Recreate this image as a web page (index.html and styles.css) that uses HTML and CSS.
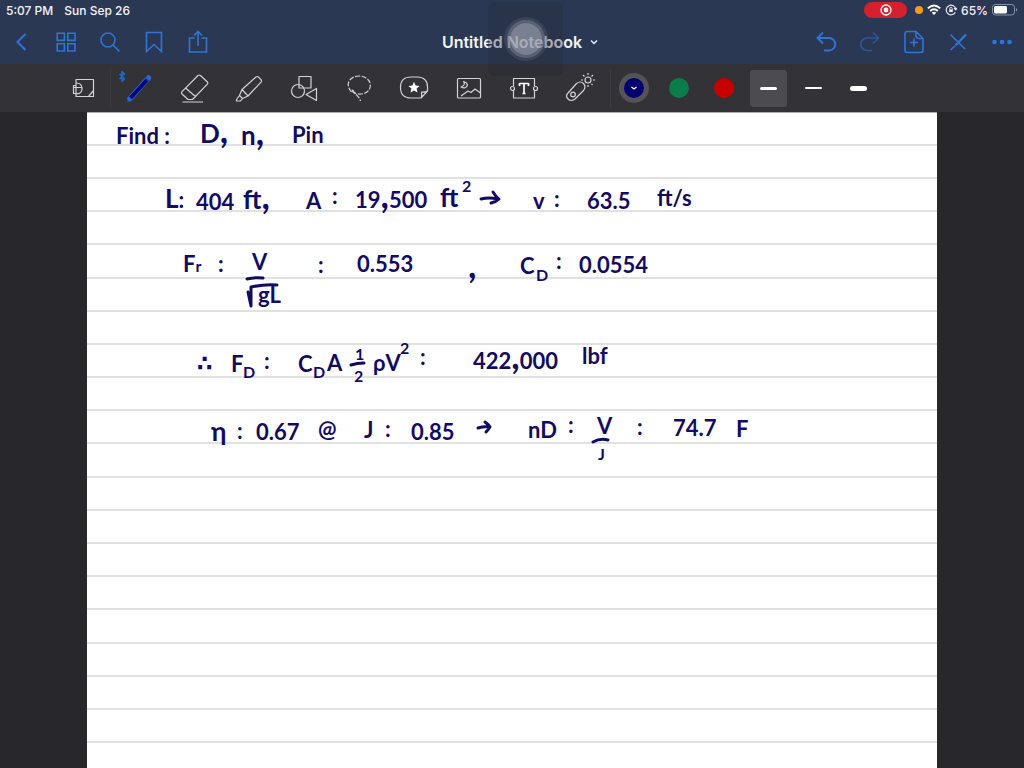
FILE: index.html
```html
<!DOCTYPE html>
<html lang="en">
<head>
<meta charset="utf-8">
<meta name="viewport" content="width=device-width, initial-scale=1">
<title>Untitled Notebook</title>
<link rel="stylesheet" href="styles.css">
</head>
<body>
<header class="top">
  <div class="status">
    <div class="status-left"><span>5:07 PM</span><span>Sun Sep 26</span></div>
    <div class="status-right">
      <span class="rec"><svg width="14" height="14" viewBox="0 0 14 14"><circle cx="7" cy="7" r="5" fill="none" stroke="#fff" stroke-width="1.3"/><circle cx="7" cy="7" r="2.4" fill="#fff"/></svg></span>
      <span class="mic"></span>
      <svg width="14" height="12" viewBox="0 0 14 12" fill="none" stroke="#fff" stroke-width="1.9"><path d="M.8 4.4Q7-1.4 13.2 4.4M3.2 7Q7 3.4 10.8 7"/><path d="M4.8 8.8Q7 6.9 9.2 8.8L7 11Z" fill="#fff" stroke="none"/></svg>
      <svg width="12" height="12" viewBox="0 0 12 12" fill="none" stroke="#e8ebf2" stroke-width="1.2"><path d="M10.3 8.2A4.8 4.8 0 1 1 10.8 5.4M9 4.4l1.8 1.4 1-1.9"/><rect x="4.2" y="5.3" width="3.6" height="2.8" fill="#e8ebf2" stroke="none"/><path d="M4.8 5.5V4.6a1.2 1.2 0 0 1 2.4 0v.9" stroke-width=".9"/></svg>
      <span>65%</span>
      <svg width="26" height="12" viewBox="0 0 26 12"><rect x=".5" y=".5" width="22" height="10.5" rx="3" fill="none" stroke="#8791a6"/><rect x="2" y="2" width="13" height="7.5" rx="1.5" fill="#fff"/><path d="M24 3.900v3.600q2.600-1.800 0-3.600Z" fill="#8791a6"/></svg>
    </div>
  </div>
  <nav class="nav">
    <div class="group">
      <button aria-label="Back"><svg class="ic" viewBox="0 0 24 24"><path d="M15.500 4 7.500 12l8 8" stroke-width="2"/></svg></button>
      <button aria-label="Thumbnails"><svg class="ic" viewBox="0 0 24 24"><path d="M3.200 3.200h7.200v7.200H3.200zM13.800 3.200H21v7.200h-7.200zM3.200 13.800h7.200V21H3.200zM13.800 13.800H21V21h-7.200z"/></svg></button>
      <button aria-label="Search"><svg class="ic" viewBox="0 0 24 24" stroke-width="1.900"><circle cx="10" cy="10" r="7"/><path d="m15 15 6.500 6.500"/></svg></button>
      <button aria-label="Bookmark"><svg class="ic" viewBox="0 0 24 24"><path d="M4.500 2.500h15v19L12 14.500l-7.500 7z"/></svg></button>
      <button aria-label="Share"><svg class="ic" viewBox="0 0 24 24"><path d="M8.500 8H3.500v14h17V8h-5M12 16V2M8 5.500l4-4 4 4"/></svg></button>
    </div>
    <button class="title">Untitled Notebook<svg width="8" height="8" viewBox="0 0 8 8" fill="none" stroke="#e6eaf3" stroke-width="1.500"><path d="m1 2.500 3 3 3-3"/></svg></button>
    <div class="group right">
      <button aria-label="Undo"><svg class="ic" viewBox="0 0 24 24"><path d="M9 2.500 3.500 8 9 13.500M3.500 8H15a6 6 0 0 1 0 12.500h-5" stroke-width="1.900"/></svg></button>
      <button aria-label="Redo" disabled><svg class="ic" viewBox="0 0 24 24"><path d="M15 2.500 20.500 8 15 13.500M20.500 8H9a6 6 0 0 0 0 12.500h5"/></svg></button>
      <button aria-label="Add page"><svg class="ic" viewBox="0 0 24 24"><path d="M3 4q0-2.500 2.500-2.500H14l7 7V20q0 2.500-2.500 2.500h-13Q3 22.500 3 20zM14 1.500v4q0 3 3 3h4M12 8.500v8M8 12.500h8"/></svg></button>
      <button aria-label="Stop editing"><svg class="ic" viewBox="0 0 24 24"><path d="M4.500 4.500 19 19"/><path d="M20 4.500 9.500 15.500" stroke-width="2.400"/><path d="m9 16-4.500 4"/></svg></button>
      <button aria-label="More"><svg class="ic" viewBox="0 0 24 24"><g fill="#2f74d6" stroke="none"><circle cx="4.500" cy="12" r="2.300"/><circle cx="12" cy="12" r="2.300"/><circle cx="19.500" cy="12" r="2.300"/></g></svg></button>
    </div>
  </nav>
</header>

<div class="tools" role="toolbar" aria-label="Drawing tools">
  <div class="toolset">
    <button aria-label="Zoom window"><svg class="tl" viewBox="0 0 32 32"><path d="M9 7.500h17.500v17H9zM9 11q6 0 6 5.500T9 22M6 15.500h9M9 13.500H6.500v8H9M21.500 24.500l5-6"/></svg></button>
    <button aria-label="Pen"><svg class="tl wide" viewBox="0 0 40 40"><path d="M11 30.500 29.500 10" stroke="#2d66c9" stroke-width="5.500" stroke-linecap="round"/><path d="m11.500 30 16.500-18" stroke="#06067d" stroke-width="4"/><path d="m26.500 10.500 4 3.500" stroke="#14388f"/><path d="m8 34 5-1.500-3-3z" fill="#2d66c9" stroke="none"/><path d="M17 33.500h9" stroke="#242f51"/><path d="m.5 6 5 5L3 13.500V3.500L5.500 6l-5 5" stroke="#1e69c8" stroke-width="1.500"/></svg></button>
    <button aria-label="Eraser"><svg class="tl" viewBox="0 0 32 32"><path d="M20 3.500q1.200-1 2.400 0l7 6.500q1 1 0 2.200L14.500 27.500H10L4 22q-1-1.200 0-2.400zM7.500 16l10.500 9M4.500 30H25"/></svg></button>
    <button aria-label="Highlighter"><svg class="tl" viewBox="0 0 32 32"><path d="m9 17.500 14-12.500q1.200-1 2.400 0l2.600 2.700q1 1.200 0 2.400L15 24zM9 17.500l-2.500 6 3 3L15 24M6.500 23.500l-3 4v1.500h4l2-2.500"/></svg></button>
    <button aria-label="Shapes"><svg class="tl" viewBox="0 0 32 32"><rect x="11" y="4.500" width="12" height="11.500"/><circle cx="10" cy="19" r="6.500"/><path d="m18 22.500 10.500-6v12z"/></svg></button>
    <button aria-label="Lasso"><svg class="tl" viewBox="0 0 32 32"><path d="M8.500 20C1 11.500 7.500 4 16 4c14 0 15.500 17 2 18-5 .3-8-1.500-8-4" stroke-dasharray="5 1.500"/><path d="M9 17.500c0 3.500 7 5.500 8.500 11.500" stroke-dasharray="5 1.500"/></svg></button>
    <button aria-label="Elements"><svg class="tl" viewBox="0 0 32 32"><path d="M13 5h6q10.500 0 10.500 10v4l-6.500 7H13Q2.500 26 2.500 15.500T13 5zM23 26q1-1.500.5-6 3 .5 6-1"/><path d="m16 9.800 1.600 3.700 4 .4-3 2.700.9 4-3.500-2.100-3.500 2.100.9-4-3-2.700 4-.4z" fill="#fff" stroke="none"/></svg></button>
    <button aria-label="Image"><svg class="tl" viewBox="0 0 32 32"><rect x="4.500" y="6.500" width="23" height="19.500" rx="1"/><path d="M10.500 9.500q2.500 3.500-2.500 5.500 5 2.500 6.500-2-.5-2.500-4-3.500zM8 24l7-5 3 1.500 4-3.500 5.500 4"/></svg></button>
    <button aria-label="Text"><svg class="tl" viewBox="0 0 32 32"><path d="M5.500 14V6.500h21V14M5.500 19v7h21v-7"/><circle cx="4.500" cy="16.500" r="2"/><circle cx="27.500" cy="16.500" r="2"/><path d="M11.500 14v-2.500h9V14M16 11.500v10M14.500 21.500h3" stroke="#fff" stroke-width="1.700"/></svg></button>
    <button aria-label="Laser pointer"><svg class="tl" viewBox="0 0 32 32"><path d="m5 21 8.500-9.500q4-3 7 0t0 7L12 27q-4 3-7 0t0-6z"/><circle cx="10" cy="22.500" r="2.300"/><circle cx="25" cy="8" r="3"/><path d="M25 1v2M30 3l-1.500 1.500M32 8h-2M29.500 13l-1-1M25 15v-2M20 3l1.500 1.500M18 8h2"/></svg></button>
  </div>
  <div class="presets">
    <button aria-label="Blue ink"><span class="swatch blue"><svg width="8" height="8" viewBox="0 0 8 8" fill="none" stroke="#fff" stroke-width="1.300"><path d="m1.500 3 2.500 2 2.500-2"/></svg></span></button>
    <button aria-label="Green ink"><span class="swatch green"></span></button>
    <button aria-label="Red ink"><span class="swatch red"></span></button>
    <button class="selected" aria-label="Medium stroke"><span class="stroke medium"></span></button>
    <button aria-label="Thin stroke"><span class="stroke thin"></span></button>
    <button aria-label="Thick stroke"><span class="stroke thick"></span></button>
  </div>
</div>

<main class="desk">
  <article class="paper">
    <svg class="sheet" aria-label="Notebook page">
      <g class="rules">
        <line x2="100%" y1="32" y2="32"/><line x2="100%" y1="65" y2="65"/><line x2="100%" y1="98" y2="98"/><line x2="100%" y1="131" y2="131"/><line x2="100%" y1="165" y2="165"/><line x2="100%" y1="198" y2="198"/><line x2="100%" y1="231" y2="231"/><line x2="100%" y1="264" y2="264"/><line x2="100%" y1="297" y2="297"/><line x2="100%" y1="330" y2="330"/><line x2="100%" y1="364" y2="364"/><line x2="100%" y1="397" y2="397"/><line x2="100%" y1="430" y2="430"/><line x2="100%" y1="463" y2="463"/><line x2="100%" y1="496" y2="496"/><line x2="100%" y1="530" y2="530"/><line x2="100%" y1="563" y2="563"/><line x2="100%" y1="596" y2="596"/><line x2="100%" y1="629" y2="629"/>
      </g>
      <g class="ink">
        <text x="29" y="31">Find :</text>
        <text x="113" y="30"><tspan class="lg">D</tspan><tspan class="comma">,</tspan></text>
        <text x="154" y="32"><tspan class="lg">n</tspan><tspan class="comma">,</tspan></text>
        <text x="205" y="30">Pin</text>

        <text x="78" y="95"><tspan class="lg">L</tspan>:</text>
        <text x="109" y="97">404</text>
        <text x="156" y="96"><tspan class="lg">ft</tspan><tspan class="comma">,</tspan></text>
        <text x="219" y="96">A</text><text x="245" y="91">:</text>
        <text x="268" y="95">19<tspan class="comma">,</tspan>500</text>
        <text class="lg" x="353" y="94">ft</text><text class="sm" x="375" y="79">2</text>
        <text x="446" y="96">v</text><text x="467" y="94">:</text>
        <text x="500" y="96">63.5</text><text x="570" y="93">ft/s</text>

        <text x="96" y="159">F<tspan class="sm">r</tspan></text><text x="131" y="159">:</text>
        <text x="165" y="157">V</text><text x="171" y="190">gL</text><text x="231" y="160">:</text>
        <text x="270" y="159">0.553</text><text class="comma" x="381" y="165">,</text>
        <text x="433" y="161">C</text><text class="sm" x="449" y="168">D</text><text x="469" y="156">:</text>
        <text x="492" y="160">0.0554</text>

        <text x="110" y="258">∴</text><text x="144" y="259">F</text><text class="sm" x="156" y="265">D</text><text x="177" y="256">:</text>
        <text x="211" y="259">C</text><text class="sm" x="226" y="265">D</text><text x="240" y="258">A</text>
        <text class="sm" x="268" y="247">1</text><text class="sm" x="267" y="269">2</text>
        <text x="286" y="258">ρV</text><text class="sm" x="313" y="241">2</text><text x="333" y="252">:</text>
        <text x="386" y="256">422<tspan class="comma">,</tspan>000</text><text x="495" y="251">lbf</text>

        <text class="lg" x="124" y="328">η</text><text x="150" y="326">:</text><text x="169" y="327">0.67</text>
        <text x="231" y="324">@</text><text x="277" y="325">J</text><text x="298" y="324">:</text><text x="324" y="327">0.85</text>
        <text x="441" y="325">nD</text><text x="481" y="320">:</text><text x="510" y="321">V</text><text class="sm" x="511" y="347">J</text>
        <text x="550" y="322">:</text><text x="586" y="323">74.7</text><text x="649" y="324">F</text>
        <path d="M394 86q8-2 17 0M406 79q4 6 6 7-3 3-8 4"/>
        <path d="M391 315q6-2 12-1M398 309q4 3 5 5-2 3-4 5"/>
        <path d="M160 166q8-2 16-1M161 179l3 14V174q14-3 26-2"/>
        <path d="M264 252q6-2 13-2M506 329q7-4 15-2"/>
      </g>
    </svg>
  </article>
</main>
<div class="assist"><span class="assist-dot"></span></div>
</body>
</html>
```
FILE: styles.css
```css
* { box-sizing: border-box; }
body {
  margin: 0;
  height: 100vh;
  display: flex;
  flex-direction: column;
  overflow: hidden;
  background: #28272b;
  font-family: Inter, "Liberation Sans", sans-serif;
  color: #f2f5fb;
}
button {
  padding: 0;
  border: 0;
  background: none;
  color: inherit;
  font: inherit;
  display: flex;
  align-items: center;
  justify-content: center;
}
.top { background: #2b3853; }
.status {
  height: 20px;
  padding: 0 6px;
  display: flex;
  justify-content: space-between;
  font-size: 12px;
  font-weight: 500;
}
.status-left { display: flex; align-items: center; gap: 11px; }
.status-right { display: flex; align-items: center; gap: 4px; }
.rec {
  width: 43px;
  height: 16px;
  margin-right: 4px;
  border-radius: 8px;
  background: #d4202f;
  display: flex;
  align-items: center;
  justify-content: center;
}
.mic { width: 8px; height: 8px; border-radius: 50%; background: #f79a1c; }
.nav {
  height: 44px;
  display: grid;
  grid-template-columns: 1fr auto 1fr;
}
.group { display: flex; }
.group button { width: 44px; }
.right { justify-content: flex-end; }
.ic { width: 24px; height: 24px; fill: none; stroke: #2f74d6; stroke-width: 1.6; }
button:disabled .ic { opacity: 0.5; }
.title { gap: 8px; padding-left: 16px; font-size: 16px; font-weight: 600; }
.tools {
  height: 48px;
  flex: none;
  padding-left: 56px;
  display: flex;
  align-items: center;
  gap: 4px;
  background: #333236;
}
.toolset, .presets { display: flex; align-items: center; }
.toolset button { width: 55px; height: 40px; }
.toolset button:first-child { border-right: 1px solid #3a393d; }
.presets { border-left: 1px solid #3d3c40; }
.presets button { width: 45px; height: 37px; }
.tl { width: 32px; height: 32px; fill: none; stroke: #d3d2d6; stroke-width: 1.2; stroke-linejoin: round; }
.wide { width: 40px; height: 40px; }
.swatch { width: 20px; height: 20px; border-radius: 50%; display: flex; align-items: center; justify-content: center; }
.blue { background: #04006f; box-shadow: 0 0 0 5px #545357; }
.green { background: #0b7c4b; }
.red { background: #c60000; }
.presets .selected { width: 37px; margin: 0 4px; border-radius: 3px; background: #4c4b50; }
.stroke { width: 17px; border-radius: 3px; background: #fff; }
.thin { height: 2px; }
.medium { height: 3px; }
.thick { height: 5px; }
.desk { flex: 1; min-height: 0; padding: 0 87px; display: flex; }
.paper { flex: 1; border-top: 1px solid #aaa9ad; background: #fff; }
.sheet { display: block; width: 100%; height: 100%; }
.rules { stroke: #e0e1e3; stroke-width: 2; }
.ink { fill: #130a61; font-family: Lato, "DejaVu Sans", sans-serif; font-size: 22px; font-weight: 700; }
.lg { font-size: 26px; }
.sm { font-size: 16px; }
.comma { font-size: 36px; }
.ink path { fill: none; stroke: #130a61; stroke-width: 3; stroke-linecap: round; stroke-linejoin: round; }
.assist {
  position: absolute;
  top: 2px;
  left: 50%;
  width: 75px;
  height: 74px;
  margin-left: -24px;
  border-radius: 6px;
  background: rgba(38, 42, 54, 0.35);
  display: flex;
  align-items: center;
  justify-content: center;
  pointer-events: none;
}
.assist-dot {
  width: 32px;
  height: 32px;
  border-radius: 50%;
  background: rgba(165, 170, 185, 0.65);
  box-shadow: 0 0 0 3px rgba(130, 136, 152, 0.45), 0 0 0 6px rgba(110, 116, 134, 0.25);
}
```
